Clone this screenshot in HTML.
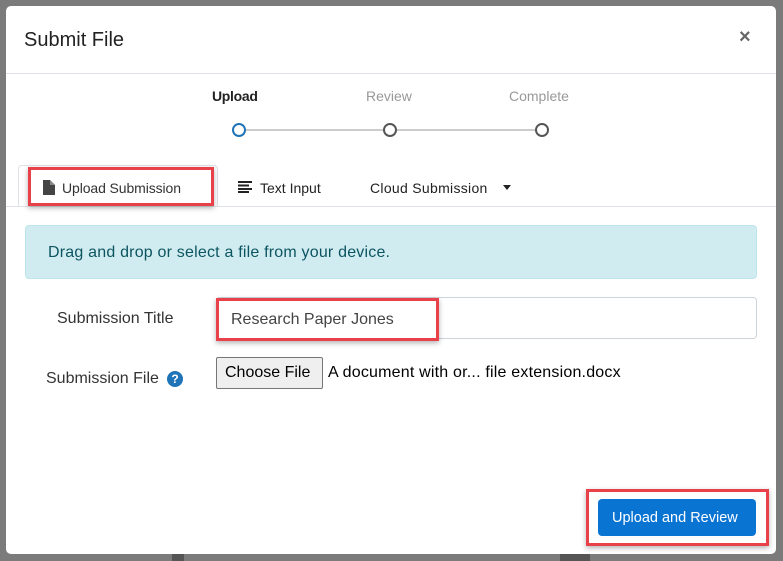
<!DOCTYPE html>
<html><head><style>
*{box-sizing:border-box;margin:0;padding:0}
body{width:783px;height:561px;background:#7b7b7b;font-family:"Liberation Sans",sans-serif;position:relative;overflow:hidden}
.m{position:absolute;left:6px;top:6px;width:770px;height:548px;background:#fff;border-radius:5px}
.abs{position:absolute;white-space:nowrap}
.red{position:absolute;border:3px solid #e8414a;box-shadow:0 2px 5px rgba(0,0,0,.3)}
</style></head><body>
<div class="abs" style="left:172px;top:550px;width:12px;height:11px;background:#555"></div>
<div class="abs" style="left:560px;top:550px;width:30px;height:11px;background:#555"></div>
<div class="m">
<div class="abs" style="left:18px;top:23px;font-size:20px;color:#222">Submit File</div>
<div class="abs" style="left:733px;top:20px;font-size:20px;color:#666;font-weight:bold">×</div>
<div style="position:absolute;left:0;top:67px;width:770px;height:1px;background:#dee2e6"></div>
<div class="abs" style="left:206px;top:82px;font-size:14px;color:#222;font-weight:bold;letter-spacing:-.3px">Upload</div>
<div class="abs" style="left:360px;top:82px;font-size:14px;color:#999">Review</div>
<div class="abs" style="left:503px;top:82px;font-size:14px;color:#999">Complete</div>
<div style="position:absolute;left:240px;top:123px;width:290px;height:2px;background:#ccc"></div>
<div style="position:absolute;left:226px;top:117px;width:14px;height:14px;border:2px solid #1f73b7;border-radius:50%;background:#fff"></div>
<div style="position:absolute;left:377px;top:117px;width:14px;height:14px;border:2px solid #555;border-radius:50%;background:#fff"></div>
<div style="position:absolute;left:529px;top:117px;width:14px;height:14px;border:2px solid #555;border-radius:50%;background:#fff"></div>
<div style="position:absolute;left:12px;top:159px;width:200px;height:42px;border:1px solid #dee2e6;border-bottom:none;border-radius:4px 4px 0 0;background:#fff"></div>
<div style="position:absolute;left:0;top:200px;width:770px;height:1px;background:#dee2e6"></div>
<svg class="abs" style="left:37px;top:174px" width="12" height="15" viewBox="0 0 12 15"><path d="M0 0H7L12 5V15H0Z" fill="#444"/><path d="M7 0V5H12" fill="#888"/></svg>
<div class="abs" style="left:56px;top:174px;font-size:14px;color:#333;letter-spacing:-.1px">Upload Submission</div>
<svg class="abs" style="left:232px;top:175px" width="14" height="12"><rect y="0" width="14" height="2" fill="#222"/><rect y="3.5" width="11" height="2" fill="#222"/><rect y="7" width="14" height="2" fill="#222"/><rect y="10" width="11" height="2" fill="#222"/></svg>
<div class="abs" style="left:254px;top:174px;font-size:14px;color:#222">Text Input</div>
<div class="abs" style="left:364px;top:174px;font-size:14px;color:#222;letter-spacing:.3px">Cloud Submission</div>
<div class="abs" style="left:497px;top:179px;width:0;height:0;border-left:4px solid transparent;border-right:4px solid transparent;border-top:5px solid #222"></div>
<div style="position:absolute;left:19px;top:219px;width:732px;height:54px;background:#d1ecf1;border:1px solid #bee5eb;border-radius:4px"></div>
<div class="abs" style="left:42px;top:238px;font-size:16px;color:#0c5460;letter-spacing:.2px">Drag and drop or select a file from your device.</div>
<div class="abs" style="left:51px;top:304px;font-size:16px;color:#333">Submission Title</div>
<div style="position:absolute;left:210px;top:291px;width:541px;height:42px;border:1px solid #ced4da;border-radius:4px"></div>
<div class="abs" style="left:225px;top:305px;font-size:16px;color:#444">Research Paper Jones</div>
<div class="abs" style="left:40px;top:364px;font-size:16px;color:#333">Submission File</div>
<div class="abs" style="left:161px;top:365px;width:16px;height:16px;border-radius:50%;background:#1f73b7;color:#fff;font-size:12px;font-weight:bold;text-align:center;line-height:16px">?</div>
<div style="position:absolute;left:210px;top:351px;width:107px;height:32px;border:1px solid #767676;border-radius:2px;background:#efefef"></div>
<div class="abs" style="left:219px;top:358px;font-size:16px;color:#000">Choose File</div>
<div class="abs" style="left:322px;top:358px;font-size:16px;color:#000;letter-spacing:.2px">A document with or... file extension.docx</div>
<div style="position:absolute;left:592px;top:493px;width:158px;height:37px;background:#0a74d3;border-radius:4px"></div>
<div class="abs" style="left:606px;top:504px;font-size:14.5px;color:#fff">Upload and Review</div>
</div>
<div class="red" style="left:28px;top:167px;width:186px;height:39px"></div>
<div class="red" style="left:216px;top:298px;width:223px;height:43px"></div>
<div class="red" style="left:586px;top:489px;width:183px;height:57px"></div>
</body></html>
